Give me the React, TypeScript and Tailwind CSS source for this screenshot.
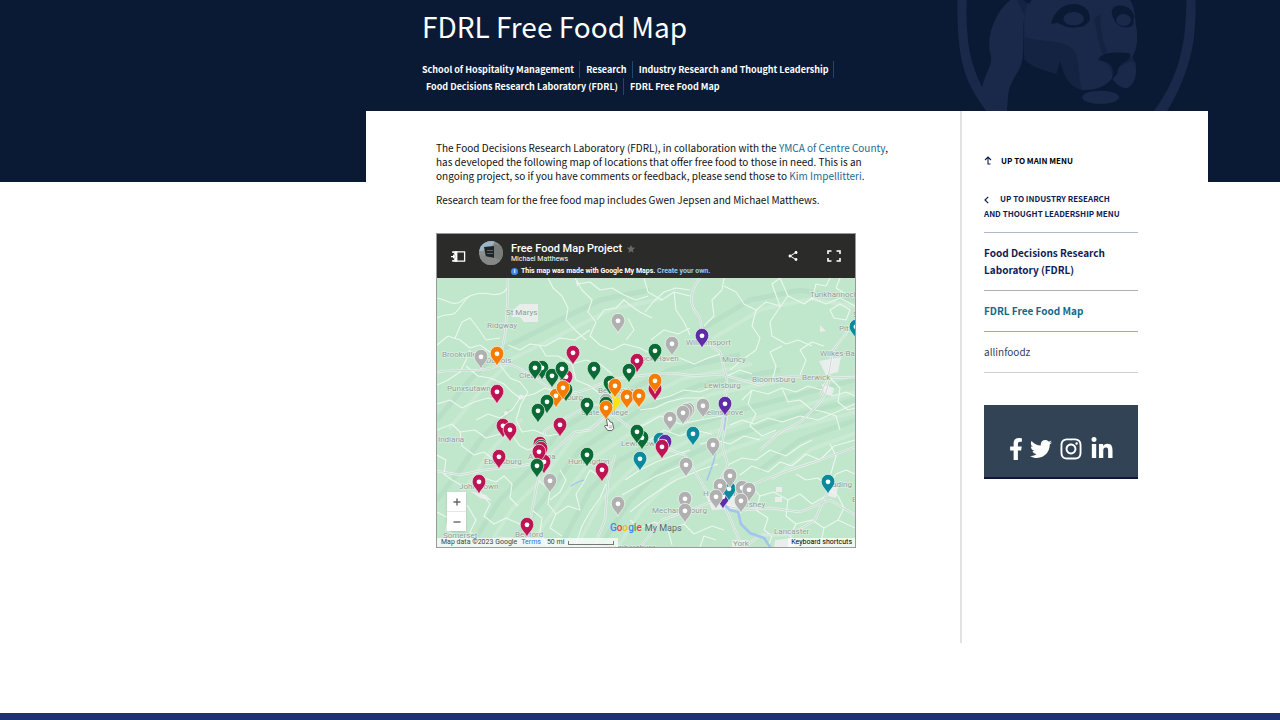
import React from 'react';
import { FaFacebookF, FaTwitter, FaInstagram, FaLinkedinIn } from 'react-icons/fa';
import { MdShare, MdFullscreen, MdStar } from 'react-icons/md';

const GREEN = '#0b6b35';
const ORANGE = '#f57c00';
const MAROON = '#bd1554';
const PURPLE = '#5e2ca5';
const TEAL = '#0a8a9c';
const GRAY = '#b0b0b0';

// [x, y, color], y is the middle of the pin head. Later pins sit on top.
const pins: [number, number, string][] = [
  [618, 321, GRAY],
  [856, 327, TEAL],
  [702, 336, PURPLE],
  [672, 344, GRAY],
  [655, 351, GREEN],
  [573, 353, MAROON],
  [481, 357, GRAY],
  [497, 354, ORANGE],
  [637, 361, MAROON],
  [542, 368, GREEN],
  [535, 368, GREEN],
  [566, 377, MAROON],
  [552, 376, GREEN],
  [562, 369, GREEN],
  [594, 369, GREEN],
  [629, 371, GREEN],
  [655, 389, MAROON],
  [655, 381, ORANGE],
  [497, 392, MAROON],
  [566, 390, GREEN],
  [556, 396, ORANGE],
  [563, 388, ORANGE],
  [610, 383, GREEN],
  [615, 386, ORANGE],
  [627, 397, ORANGE],
  [639, 396, ORANGE],
  [547, 402, GREEN],
  [538, 411, GREEN],
  [587, 405, GREEN],
  [725, 404, PURPLE],
  [703, 406, GRAY],
  [688, 410, GRAY],
  [686, 411, GRAY],
  [683, 413, GRAY],
  [670, 419, GRAY],
  [606, 401, GRAY],
  [606, 404, GREEN],
  [606, 408, ORANGE],
  [560, 425, MAROON],
  [503, 426, MAROON],
  [510, 430, MAROON],
  [642, 438, GREEN],
  [637, 432, GREEN],
  [693, 434, TEAL],
  [660, 440, TEAL],
  [665, 442, PURPLE],
  [662, 447, MAROON],
  [713, 445, GRAY],
  [540, 444, MAROON],
  [541, 447, GREEN],
  [541, 449, MAROON],
  [544, 462, MAROON],
  [539, 452, MAROON],
  [499, 457, MAROON],
  [587, 455, GREEN],
  [537, 466, GREEN],
  [640, 459, TEAL],
  [686, 465, GRAY],
  [602, 470, MAROON],
  [550, 481, GRAY],
  [479, 482, MAROON],
  [828, 482, TEAL],
  [723, 497, PURPLE],
  [729, 489, TEAL],
  [730, 476, GRAY],
  [720, 486, GRAY],
  [716, 497, GRAY],
  [742, 488, GRAY],
  [749, 490, GRAY],
  [741, 501, GRAY],
  [685, 499, GRAY],
  [685, 511, GRAY],
  [618, 504, GRAY],
  [527, 525, MAROON],
];

const towns: [number, number, string][] = [
  [506, 315, 'St Marys'],
  [487, 328, 'Ridgway'],
  [810, 297, 'Tunkhannock'],
  [853, 317, 'Scranton'],
  [839, 331, 'Pittston'],
  [442, 357, 'Brookville'],
  [486, 363, 'DuBois'],
  [447, 391, 'Punxsutawney'],
  [519, 378, 'Clearfield'],
  [543, 400, 'Philipsburg'],
  [598, 393, 'Bellefonte'],
  [581, 415, 'State College'],
  [686, 345, 'Williamsport'],
  [637, 361, 'Lock Haven'],
  [722, 362, 'Muncy'],
  [820, 356, 'Wilkes-Barre'],
  [752, 382, 'Bloomsburg'],
  [802, 380, 'Berwick'],
  [704, 388, 'Lewisburg'],
  [702, 415, 'Selinsgrove'],
  [438, 442, 'Indiana'],
  [484, 464, 'Ebensburg'],
  [528, 459, 'Altoona'],
  [568, 464, 'Huntingdon'],
  [621, 446, 'Lewistown'],
  [459, 489, 'Johnstown'],
  [515, 537, 'Bedford'],
  [443, 538, 'Somerset'],
  [703, 496, 'Harrisburg'],
  [736, 507, 'Hershey'],
  [652, 513, 'Mechanicsburg'],
  [774, 534, 'Lancaster'],
  [733, 546, 'York'],
  [823, 487, 'Reading'],
  [852, 502, 'Ephrata'],
  [603, 550, 'Chambersburg'],
];

const ridges = [
  'M437 420L470 380L500 350L540 330L600 300L650 290',
  'M470 547L500 500L530 470L560 430L610 400L670 370L740 355',
  'M510 547L550 490L580 450L640 410L700 385L780 370',
  'M560 547L590 490L620 460L680 430L740 410L855 380',
  'M600 547L630 500L660 470L720 440L780 420L855 400',
  'M437 500L460 470L480 440L510 410',
  'M700 330L750 300L800 290L855 300',
  'M760 470L800 440L855 420',
];

const majorRoads = [
  'M437 372C460 368 480 374 500 365C520 360 535 385 560 392C580 398 600 380 620 378C640 376 660 372 680 374C700 378 720 372 727 376L760 385C780 372 800 378 828 378L855 377',
  'M508 278L507 310L505 335L500 360',
  'M700 278C694 286 690 296 692 304C694 314 702 316 701 324L703 340L720 352L727 380L725 405L722 425L716 445',
  'M527 547L532 510L538 480L540 455L545 430L565 418L590 405L605 405',
  'M604 417L590 430L575 432L560 445L545 460',
  'M437 471L460 475L484 470L520 466L540 462',
  'M528 540L560 545M528 540L500 538L470 547',
  'M610 412L640 436L660 446L685 455L700 480L712 500',
  'M640 547L662 520L690 510L716 500L750 485L790 470L820 460L855 447',
  'M722 505L745 510L770 508L800 512L830 500L855 515',
  'M725 507L735 530L742 547',
  'M716 502L720 480L728 465L722 445L728 410',
  'M820 395L828 378L833 350L845 335L855 320',
  'M829 378C828 400 812 410 800 422L780 432L760 450',
  'M745 547L760 535L790 535L815 520L828 490',
  'M594 547L605 520L608 480L615 455',
];

const roads = [
  'M437 298C448 300 452 306 460 302C470 294 480 292 490 294C500 296 506 292 508 286',
  'M437 318C446 312 452 318 458 310C464 302 466 298 470 296',
  'M455 338L462 322L470 318L478 328L486 340L500 338',
  'M508 345L520 350L530 344L545 346L560 338L575 340L590 330',
  'M548 278L553 288L562 296L568 308L566 320L575 330L586 340',
  'M575 278L582 290L592 300L588 312L596 322L590 336L600 345',
  'M577 284L590 282L600 290L612 288L624 295L636 300L648 296',
  'M597 320L604 310L616 308L624 300L630 305L640 312L652 318',
  'M644 278L648 292L662 300L674 292L690 296M674 292L676 310L684 322L690 335',
  'M645 312L655 300L664 292L676 288L690 290M724 278L722 290L712 300L714 316L704 326',
  'M724 286L736 292L744 304L756 310L766 302L780 306L772 284L780 278',
  'M756 310L752 326L760 338L756 350L742 360L730 370',
  'M780 278L788 296L778 310L770 322L772 336L786 344L798 340L812 346',
  'M788 296L804 304L812 298L826 304L840 298L855 306',
  'M812 300L816 284L826 286L830 278M840 278L836 288L846 294',
  'M830 310L840 304L850 310L846 320L834 318Z',
  'M437 345L448 336L460 340L470 348L480 345L490 352',
  'M437 385L448 380L460 372L466 360L470 350',
  'M437 404L450 400L462 408L474 402L488 398L498 400',
  'M466 366L478 376L490 378L504 384L512 392L520 398',
  'M500 365L510 378L520 382L528 392L521 404L516 420',
  'M521 397L534 394L545 388L556 392M520 398L512 410L500 418L488 414L476 420',
  'M437 430L452 424L460 432L475 430L486 438L500 434',
  'M460 432L462 446L474 455L484 452L494 460',
  'M516 420L522 432L534 430L548 436L558 434',
  'M510 432L520 446L528 450L538 446',
  'M437 455L446 460L444 474L452 480L463 486',
  'M470 486L484 478L496 482L504 476L512 484L510 498L518 506',
  'M480 492L490 504L484 516L494 524L506 518L520 524L528 530',
  'M467 505L476 520L470 532L480 540M437 512L448 518L446 530L456 536',
  'M538 480L550 490L548 504L556 514L550 528L562 536',
  'M556 514L568 506L580 510L576 494L584 482L590 470L602 478',
  'M532 510L542 518L540 532L548 547M575 547L582 526L590 512L600 498L606 484',
  'M560 470L566 480L560 492L550 500M600 345L612 350L624 344L640 348L655 356',
  'M540 346L546 356L558 356L572 364L586 360L600 364L612 374',
  'M572 364L576 380L590 386L600 394M628 318L634 330L626 340M651 340L664 330L678 334L690 328',
  'M655 356L668 362L680 358L694 364L708 358L720 354',
  'M655 400L670 396L684 390L700 392L716 386M640 410L655 408L668 402L684 398L704 398',
  'M630 430L646 424L660 416L680 424L700 420L722 416',
  'M650 440L664 430L680 436L694 430L712 434M700 444L716 440L730 444L744 436L760 440',
  'M625 480L640 470L656 462L672 456L690 450M622 495L640 485L656 476L676 468L690 462',
  'M630 512L645 500L660 490L676 480L700 470L718 464M630 520L640 528L655 522L668 530L684 524',
  'M668 530L672 545M684 524L694 534L712 526L724 530M700 547L704 536L716 540',
  'M728 465L742 458L756 460L770 450L786 456L800 446L812 440',
  'M740 475L752 466L768 472L780 462L792 466L806 454L820 460L834 446L855 440',
  'M750 485L760 496L774 492L788 500L800 494L812 504L826 496',
  'M760 496L756 510L768 518L764 530L772 536L768 547M788 500L786 516L796 524L790 536L800 547',
  'M796 524L812 520L824 528L838 520L855 528M824 528L820 547M838 520L844 508L838 496L830 490',
  'M742 400L752 390L768 394L782 388L796 392L808 386L822 390',
  'M752 390L748 404L756 414L750 426L762 436L776 430M782 388L788 402L800 400L812 410',
  'M772 382L776 366L770 352L782 346M800 375L806 360L800 350L812 342L824 346',
  'M832 396L846 392L855 396M830 378L840 388L838 402L848 410L855 408M840 430L836 416L824 412L815 410',
  'M828 486L836 474L846 470L855 474M828 486L818 478L806 480L796 474M830 444L836 456L832 470L828 482',
  'M727 376L740 370L752 374M730 425L742 420L754 424L768 418L782 422L800 416L818 420L855 404',
];

const MapPinShape: React.FC<{ x: number; y: number; color: string }> = ({ x, y, color }) => (
  <g transform={`translate(${x} ${y})`}>
    <path
      d="M0 12.4C-1.4 7.4-6.8 5-6.8-.6A6.8 7.1 0 0 1 6.8-.6C6.8 5 1.4 7.4 0 12.4Z"
      fill={color}
      stroke="#f4fbf6"
      strokeWidth="0.7"
    />
    <circle cx="0" cy="-0.2" r="2.4" fill="#fff" />
  </g>
);

const TerrainMap: React.FC = () => (
  <svg viewBox="437 278 418 269" className="block w-full" role="img" aria-label="Map of free food locations">
    <rect x="437" y="278" width="418" height="269" fill="#c0e6cc" />
    <g fill="none" stroke="#b2dcc1" strokeWidth="5" opacity="0.5" strokeLinejoin="round">
      {ridges.map((d) => (
        <path key={d} d={d} />
      ))}
    </g>
    <g fill="none" stroke="#d5efdc" strokeWidth="4" opacity="0.5" strokeLinejoin="round" transform="translate(12 9)">
      {ridges.map((d) => (
        <path key={d} d={d} />
      ))}
    </g>
    {/* built-up areas */}
    <g fill="#e9eeec">
      <path d="M513 310L520 304H538V322H524L520 317H512Z" />
      <path d="M819 361L841 357L838 372L826 375Z" />
      <path d="M822 384L834 388L832 396L824 394ZM820 325L826 331L820 332Z" />
      <path d="M470 491L486 495L492 501L480 498ZM576 281L580 283L577 287Z" />
      <path d="M776 487H782V492H776ZM775 497H782V502H775ZM706 496L736 494L742 508L712 510Z" />
      <path d="M775 540L792 538L796 547H774ZM826 488L838 486L836 498L828 496ZM732 540H748V547H732Z" />
      <circle cx="521" cy="397" r="2.5" />
      <circle cx="506" cy="413" r="2" />
    </g>
    <g fill="none" stroke="#eaf8ed" strokeWidth="1.1" strokeLinejoin="round">
      {roads.map((d) => (
        <path key={d} d={d} />
      ))}
    </g>
    <g fill="none" stroke="#ffffff" strokeWidth="2.4" strokeLinejoin="round" opacity="0.6">
      {majorRoads.map((d) => (
        <path key={d} d={d} />
      ))}
    </g>
    <g fill="none" stroke="#cfd8d7" strokeWidth="1.2" strokeLinejoin="round">
      {majorRoads.map((d) => (
        <path key={d} d={d} />
      ))}
    </g>
    {/* rivers */}
    <g fill="none" stroke="#a3c4ee" strokeLinecap="round">
      <path d="M716 448L714 460L710 472L707 480" strokeWidth="1.5" />
      <path d="M722 503L730 510L738 512L741 524L750 533L764 538L770 547" strokeWidth="2.6" />
      <path d="M571 486L578 482L584 480M726 415L724 430" strokeWidth="1.3" />
    </g>
    <g
      fontFamily="Roboto, sans-serif"
      fontSize="8"
      fill="#8f9a95"
      stroke="#e4f4e8"
      strokeWidth="1.2"
      paintOrder="stroke"
    >
      {towns.map(([x, y, name]) => (
        <text key={name} x={x} y={y}>
          {name}
        </text>
      ))}
    </g>
    <path d="M608 394L618 397L621 402L615 410L610 412Z" fill="#fbe116" />
    {pins.map(([x, y, color]) => (
      <MapPinShape key={`${x}-${y}`} x={x} y={y} color={color} />
    ))}
    {/* hand cursor */}
    <path
      d="M606.5 419.5Q607.8 418.2 608.8 419.5L610.2 422L612.5 422.6L613.6 428.5L611.8 430.5H607.8L604.6 426.4Q604.6 425.2 606 425.4L607.6 426Z"
      fill="#fff"
      stroke="#444"
      strokeWidth="0.8"
    />
    <path d="M608.6 426H612M608.6 427.8H612" stroke="#555" strokeWidth="0.5" />
  </svg>
);

const FreeFoodMap: React.FC = () => (
  <section className="mt-[26px] w-full max-w-[420px] border border-[#9a9a9a] font-[Roboto,sans-serif]">
    <div className="flex h-[44px] items-center bg-[#2b2c2a] pl-[14px] pr-[11px] text-white">
      <button type="button" aria-label="Toggle legend" className="shrink-0">
        <svg viewBox="0 0 15 13" className="block h-[13px] w-[15px]">
          <path d="M4 1.8H13.6V11.2H4Z" fill="none" stroke="#fff" strokeWidth="1.3" />
          <path d="M3.4 1.2H6.4V11.8H3.4V9.2L5 6.5L3.4 4ZM0 5.9H2V4.2L4.6 6.5L2 8.8V7.2H0Z" fill="#fff" />
          <path d="M1.2 1.2H3.4V3H1.2ZM1.2 10H3.4V11.8H1.2Z" fill="#fff" />
        </svg>
      </button>
      <svg viewBox="0 0 24 24" className="mb-1.5 ml-[13px] h-6 w-6 shrink-0 rounded-full">
        <rect width="24" height="24" fill="#8b8f8e" />
        <path d="M0 0H16L13 5L3 10H0Z" fill="#9db4c7" />
        <path d="M5 6L15 5V17L7 16Z" fill="#1e2326" />
        <path d="M15 3L24 5V20L15 17Z" fill="#777b79" />
        <path d="M8 9.5H14M8 12.5H14" stroke="#56666c" strokeWidth="1" />
        <path d="M0 16L6 15L15 17L24 20V24H0Z" fill="#858886" />
      </svg>
      <div className="ml-2 mt-[6px] flex-1">
        <h2 className="flex items-center text-[11px] font-medium leading-[12px]">
          Free Food Map Project
          <MdStar className="ml-1 h-2.5 w-2.5 text-[#686868]" />
        </h2>
        <p className="text-[7px] leading-[8px]">Michael Matthews</p>
        <p className="mt-1 flex items-center text-[7px] leading-[8px]">
          <span className="mr-[3px] flex h-[7px] w-[7px] items-center justify-center rounded-full bg-[#4285f4] text-[6px] font-bold">
            i
          </span>
          <span className="font-bold">
            This map was made with Google My Maps.{' '}
            <a href="#create" className="text-[#9cc8ec]">
              Create your own.
            </a>
          </span>
        </p>
      </div>
      <button type="button" aria-label="Share" className="mr-[25px]">
        <MdShare className="h-3 w-3" />
      </button>
      <button type="button" aria-label="Full screen">
        <svg viewBox="0 0 20 20" className="block h-5 w-5">
          <path
            d="M4 8V5H7.5M12.5 5H16V8M16 12V15H12.5M7.5 15H4V12"
            fill="none"
            stroke="currentColor"
            strokeWidth="1.6"
          />
        </svg>
      </button>
    </div>
    <div className="relative">
      <TerrainMap />
      <div className="absolute bottom-[16px] left-[10px] flex w-[19px] flex-col bg-white text-[#666] shadow">
        <button type="button" aria-label="Zoom in" className="flex h-[19px] items-center justify-center">
          <svg viewBox="0 0 8 8" className="h-2 w-2">
            <path d="M4 0.5V7.5M0.5 4H7.5" stroke="currentColor" strokeWidth="1.4" />
          </svg>
        </button>
        <button
          type="button"
          aria-label="Zoom out"
          className="flex h-5 items-center justify-center border-t border-[#e6e6e6]"
        >
          <svg viewBox="0 0 8 8" className="h-2 w-2">
            <path d="M0.5 4H7.5" stroke="currentColor" strokeWidth="1.4" />
          </svg>
        </button>
      </div>
      <div className="absolute bottom-[12px] left-[173px] flex items-baseline text-[9px] leading-[14px] text-[#5f6368]">
        <span className="mr-[3px] text-[10px] font-medium">
          <span className="text-[#4285f4]">G</span>
          <span className="text-[#ea4335]">o</span>
          <span className="text-[#fbbc05]">o</span>
          <span className="text-[#4285f4]">g</span>
          <span className="text-[#34a853]">l</span>
          <span className="text-[#ea4335]">e</span>
        </span>
        My Maps
      </div>
      <div className="absolute bottom-0 left-0 flex h-[9px] items-center bg-white/70 pl-1 pr-1 text-[7px] leading-[9px] text-[#444]">
        <span>Map data ©2023 Google</span>
        <a href="#terms" className="ml-1 text-[#1a73e8]">
          Terms
        </a>
        <span className="ml-1.5">50 mi</span>
        <span className="ml-1 h-1 w-[46px] border border-t-0 border-[#777]" />
      </div>
      <button
        type="button"
        className="absolute bottom-0 right-0 h-[9px] bg-white/70 px-[3px] text-[7px] leading-[9px] text-black"
      >
        Keyboard shortcuts
      </button>
    </div>
  </section>
);

const LionShield: React.FC = () => (
  <svg viewBox="170 0 717 333" className="mr-[12px] h-[111px] w-[239px] shrink-0" aria-hidden="true">
    <g fill="#1a2949">
      <path d="M171 0H199C197 60 200 130 214 180C222 210 234 240 246 262C252 220 276 200 272 170C264 140 264 110 276 80C290 40 312 14 330 0H400L372 46C366 100 370 150 366 180C360 215 330 240 324 280L320 333H258C222 285 196 240 184 180C172 120 171 60 171 0Z" />
      <path d="M858 0H885C887 70 882 130 866 184C850 240 826 292 800 333H760C794 290 818 240 834 190C852 130 858 70 858 0Z" />
    </g>
    <path
      d="M350 0H688C698 10 704 36 706 74C714 104 712 146 696 170L707 190C708 220 700 246 682 264C668 266 650 256 634 236C622 256 592 270 545 270C506 262 488 220 480 182L468 222C426 212 386 196 372 178C370 150 366 100 372 46Z"
      fill="#152342"
    />
    <path
      d="M384 0H688C698 10 704 36 706 74C714 104 712 146 696 170L610 158L600 180C620 190 634 200 638 230C620 256 592 270 545 270C532 230 540 180 520 150C490 116 430 130 372 110L372 46Z"
      fill="#1a2949"
    />
    <path d="M646 206L690 184C702 180 708 200 707 214C706 240 696 256 682 264C664 266 646 250 638 236Z" fill="#1a2949" />
    <path d="M580 60C592 90 590 120 606 160L622 156C604 120 600 90 600 40Z" fill="#152342" />
    <g fill="#0a1a35">
      <path d="M452 72C462 30 492 10 526 12C556 16 572 36 568 62L552 78C520 86 500 84 488 76L470 68Z" />
      <path d="M634 34C640 12 664 14 680 22C700 32 706 50 698 62C704 74 694 82 676 82C652 82 636 60 634 34Z" />
      <path d="M594 180C600 158 640 154 688 160C694 176 680 184 666 190C656 200 652 208 650 222L634 240L638 218C638 196 626 188 612 184Z" />
      <path d="M368 0L386 12L394 0Z" />
    </g>
    <g fill="#1a2949">
      <ellipse cx="520" cy="56" rx="31" ry="20" />
      <ellipse cx="670" cy="60" rx="22" ry="18" />
      <ellipse cx="601" cy="292" rx="55" ry="20" />
    </g>
  </svg>
);

const crumbs = [
  'School of Hospitality Management',
  'Research',
  'Industry Research and Thought Leadership',
  'Food Decisions Research Laboratory (FDRL)',
  'FDRL Free Food Map',
];

const App: React.FC = () => {
  return (
    <div className="min-h-screen bg-white font-['Source_Sans_Pro','Noto_Sans_CJK_SC',sans-serif] text-[#111]">
      {/* Header */}
      <header className="grid grid-cols-[366fr_842fr_72fr] bg-[#0a1a35] pb-[71px] text-white">
        <div className="col-start-2 flex h-[111px] justify-between">
          <div className="pl-[56px]">
            <h1 className="pt-1.5 text-[28px] leading-[40px]">FDRL Free Food Map</h1>
            <nav aria-label="Breadcrumb" className="mt-[15px] max-w-[430px]">
              <ol className="text-[9px] font-bold leading-[17px]">
                {crumbs.map((crumb) => (
                  <React.Fragment key={crumb}>
                    <li className="inline-block border-r border-[#1d4675] pl-[4px] pr-[5px] first:pl-0 last:border-r-0">
                      <a href="#crumb">{crumb}</a>
                    </li>{' '}
                  </React.Fragment>
                ))}
              </ol>
            </nav>
          </div>
          <LionShield />
        </div>
      </header>

      {/* Content */}
      <div className="-mt-[71px] grid grid-cols-[366fr_842fr_72fr]">
        <div className="col-start-2 grid grid-cols-[594fr_248fr] bg-white">
          <main className="pb-[95px] pl-[70px] pr-[69px] pt-[30px] text-[10px] leading-[14px]">
            <p>
              The Food Decisions Research Laboratory (FDRL), in collaboration with the{' '}
              <a href="#ymca" className="text-[#1b6a92]">
                YMCA of Centre County
              </a>
              , has developed the following map of locations that offer free food to those in need. This is an ongoing
              project, so if you have comments or feedback, please send those to{' '}
              <a href="#kim" className="text-[#1b6a92]">
                Kim Impellitteri
              </a>
              .
            </p>
            <p className="mt-[10px]">
              Research team for the free food map includes Gwen Jepsen and Michael Matthews.
            </p>
            <FreeFoodMap />
          </main>

          {/* Sidebar */}
          <aside className="border-l-2 border-[#e2e2e2] pl-[22px] pr-[70px] pt-[42px]">
            <nav aria-label="Section" className="text-[#0f1c55]">
              <a href="#main" className="flex items-center text-[8px] font-bold leading-[15px] text-black">
                <svg viewBox="0 0 8 9" className="mr-[9px] h-[9px] w-2">
                  <path d="M1 4L4 1L7 4M4 1V8H6.5" fill="none" stroke="#0f1c55" strokeWidth="1.1" />
                </svg>
                UP TO MAIN MENU
              </a>
              <a
                href="#up"
                className="mt-[23px] block border-b border-[#b3b8c6] pb-[11px] pr-3 text-[8px] font-bold leading-[15px]"
              >
                <svg viewBox="0 0 5 8" className="mr-[11px] inline h-2 w-[5px]">
                  <path d="M4.2 0.8L1 4L4.2 7.2" fill="none" stroke="#0f1c55" strokeWidth="1.2" />
                </svg>
                UP TO INDUSTRY RESEARCH AND THOUGHT LEADERSHIP MENU
              </a>
              <ul className="text-[10px] leading-[17px]">
                <li className="border-b border-[#b0b0b4] pb-3 pt-[11px] font-bold">
                  <a href="#fdrl">Food Decisions Research Laboratory (FDRL)</a>
                </li>
                <li className="border-b border-[#84b4bc] pb-3 pt-[11px] font-bold text-[#0f6a90]">
                  <a href="#map">FDRL Free Food Map</a>
                </li>
                <li className="border-b border-[#ccd0d4] pb-3 pt-[11px] text-[#33405e]">
                  <a href="#allinfoodz">allinfoodz</a>
                </li>
              </ul>
            </nav>
            <div className="mt-8 flex h-[74px] items-center justify-center gap-[7px] border-b-2 border-[#10183a] bg-[#314354] pt-4 text-white">
              <a href="#facebook" aria-label="Facebook">
                <FaFacebookF className="h-[22px] w-[14px]" />
              </a>
              <a href="#twitter" aria-label="Twitter">
                <FaTwitter className="h-[22px] w-[22px]" />
              </a>
              <a href="#instagram" aria-label="Instagram">
                <FaInstagram className="h-[24px] w-[24px]" />
              </a>
              <a href="#linkedin" aria-label="LinkedIn">
                <FaLinkedinIn className="h-[24px] w-[24px]" />
              </a>
            </div>
          </aside>
        </div>
      </div>

      <footer className="mt-[70px] h-[7px] bg-[#1e3272]" />
    </div>
  );
};

export default App;
